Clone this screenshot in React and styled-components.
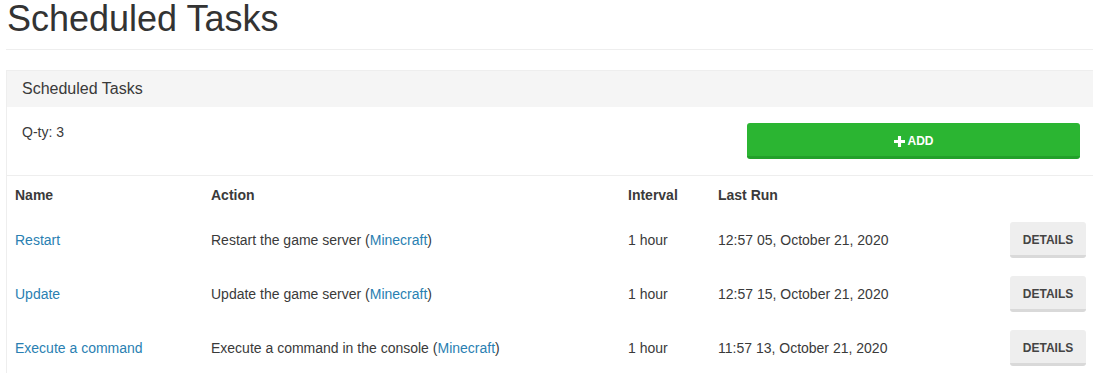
import React from 'react'
import styled, { createGlobalStyle } from 'styled-components'

const tasks = [
  { name: 'Restart', action: 'Restart the game server', interval: '1 hour', lastRun: '12:57 05, October 21, 2020' },
  { name: 'Update', action: 'Update the game server', interval: '1 hour', lastRun: '12:57 15, October 21, 2020' },
  { name: 'Execute a command', action: 'Execute a command in the console', interval: '1 hour', lastRun: '11:57 13, October 21, 2020' },
]

function App() {
  return (
    <Page>
      <GlobalStyle />
      <Title>Scheduled Tasks</Title>
      <Panel>
        <PanelHeading>Scheduled Tasks</PanelHeading>
        <PanelBody>
          <Qty>Q-ty: {tasks.length}</Qty>
          <AddButton>
            <PlusIcon viewBox="0 0 10 10">
              <path d="M3.6 0h2.8v3.6H10v2.8H6.4V10H3.6V6.4H0V3.6h3.6z" />
            </PlusIcon>
            ADD
          </AddButton>
        </PanelBody>
        <Table>
          <Row header>
            <HeadCell>Name</HeadCell>
            <HeadCell>Action</HeadCell>
            <HeadCell>Interval</HeadCell>
            <HeadCell>Last Run</HeadCell>
            <HeadCell />
          </Row>
          {tasks.map((task, index) => (
            <Row key={index}>
              <Cell><Link href="#">{task.name}</Link></Cell>
              <Cell>{task.action} (<Link href="#">Minecraft</Link>)</Cell>
              <Cell>{task.interval}</Cell>
              <Cell>{task.lastRun}</Cell>
              <Cell align="right"><DetailsButton>DETAILS</DetailsButton></Cell>
            </Row>
          ))}
        </Table>
      </Panel>
    </Page>
  )
}

export default App

const GlobalStyle = createGlobalStyle`
  html, body {
    margin: 0;
    padding: 0;
    background: #fff;
    overflow: hidden;
  }
  body {
    font-family: "Liberation Sans", Arial, sans-serif;
    font-size: 14px;
    line-height: 20px;
    color: #3a3a3a;
  }
`
const Page = styled.div`
  padding: 0 0 0 6px;
  margin-right: -1px;
`
const Title = styled.h1`
  margin: 0;
  padding: 0 0 11px 1px;
  font-size: 36px;
  font-weight: 400;
  line-height: 38px;
  color: #333;
  border-bottom: 1px solid #eee;
`
const Panel = styled.div`
  margin-top: 20px;
  border: 1px solid #eee;
  border-right: none;
  background: #fff;
`
const PanelHeading = styled.div`
  background: #f5f5f5;
  padding: 8px 15px;
  height: 20px;
  font-size: 16px;
  line-height: 20px;
  color: #3a3a3a;
`
const PanelBody = styled.div`
  display: flex;
  justify-content: space-between;
  align-items: flex-start;
  padding: 16px 14px 16px 15px;
  border-bottom: 1px solid #eee;
`
const Qty = styled.div`
  font-size: 14px;
  line-height: 18px;
  color: #3a3a3a;
`
const AddButton = styled.button`
  display: flex;
  align-items: center;
  justify-content: center;
  gap: 3px;
  width: 333px;
  height: 36px;
  border: none;
  border-bottom: 3px solid #22a02a;
  border-radius: 3px;
  background: #2bb532;
  color: #fff;
  font-family: "Liberation Sans", Arial, sans-serif;
  font-size: 12px;
  font-weight: 700;
  padding: 3px 0 0;
  cursor: pointer;
`
const PlusIcon = styled.svg`
  width: 11px;
  height: 11px;
  fill: #fff;
`
const Table = styled.div`
  display: flex;
  flex-direction: column;
`
const Row = styled.div`
  display: grid;
  grid-template-columns: 196px 417px 90px 1fr auto;
  align-items: center;
  height: ${props => (props.header ? '37px' : '54px')};
`
const Cell = styled.div`
  padding: 0 8px;
  text-align: ${props => props.align || 'left'};
  white-space: nowrap;
  color: #3a3a3a;
`
const HeadCell = styled(Cell)`
  font-weight: 700;
`
const Link = styled.a`
  color: #2a7fb2;
  text-decoration: none;
`
const DetailsButton = styled.button`
  width: 76px;
  height: 36px;
  border: none;
  border-bottom: 3px solid #d9d9d9;
  border-radius: 3px;
  background: #eee;
  color: #444;
  font-family: "Liberation Sans", Arial, sans-serif;
  font-size: 12px;
  font-weight: 700;
  padding: 3px 0 0;
  cursor: pointer;
`
